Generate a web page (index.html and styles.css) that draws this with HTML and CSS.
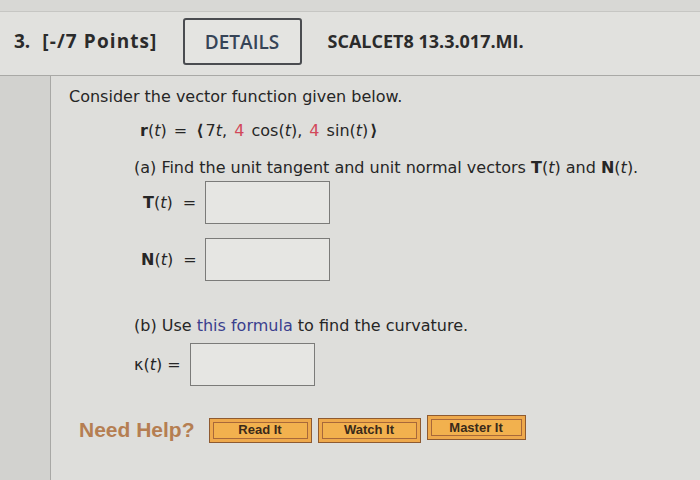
FILE: index.html
```html
<!DOCTYPE html>
<html>
<head>
<meta charset="utf-8">
<link rel="stylesheet" href="styles.css">
</head>
<body>
<div class="page">
  <div class="topstrip"></div>
  <header class="header">
    <span class="qnum">3.</span><span class="pts">[-/7 Points]</span>
    <span class="details">DETAILS</span>
    <span class="code">SCALCET8 13.3.017.MI.</span>
  </header>
  <div class="body">
    <div class="gutter"></div>
    <main class="content">
      <p class="intro">Consider the vector function given below.</p>
      <p class="formula"><b class="vec">r</b>(<i>t</i>) = <span class="ang">⟨</span>7<i>t</i>, <span class="red">4</span> cos(<i>t</i>), <span class="red">4</span> sin(<i>t</i>)<span class="ang">⟩</span></p>
      <p class="part parta">(a) Find the unit tangent and unit normal vectors <b>T</b>(<i>t</i>) and <b>N</b>(<i>t</i>).</p>
      <div class="ansrow rowT">
        <span class="lbl"><b>T</b>(<i>t</i>) &nbsp;=</span>
        <span class="box"></span>
      </div>
      <div class="ansrow rowN">
        <span class="lbl"><b>N</b>(<i>t</i>) &nbsp;=</span>
        <span class="box"></span>
      </div>
      <p class="part partb">(b) Use <span class="link">this formula</span> to find the curvature.</p>
      <div class="ansrow rowK">
        <span class="lbl">κ(<i>t</i>) =</span>
        <span class="box"></span>
      </div>
      <div class="help">
        <span class="needhelp">Need Help?</span>
        <span class="btn">Read It</span>
        <span class="btn">Watch It</span>
        <span class="btn btn3">Master It</span>
      </div>
    </main>
  </div>
</div>
</body>
</html>
```
FILE: styles.css
```css
html, body {
  margin: 0;
  padding: 0;
}
body {
  width: 700px;
  height: 480px;
  overflow: hidden;
  background: #d9d9d6;
}
.page {
  display: flex;
  flex-direction: column;
  height: 480px;
}
.topstrip {
  height: 11px;
  background: #d8d8d5;
  border-bottom: 1px solid #c6c6c3;
}
.header {
  height: 64px;
  box-sizing: border-box;
  padding-bottom: 6px;
  display: flex;
  align-items: center;
  background: #e1e1de;
  border-bottom: 1px solid #a9a9a6;
  font-family: "Open Sans", sans-serif;
  color: #2b2b2b;
  font-size: 19px;
  font-weight: 700;
}
.qnum {
  margin-left: 14px;
}
.pts {
  margin-left: 12px;
  letter-spacing: 1.1px;
}
.details {
  margin-left: 25px;
  width: 115px;
  height: 43px;
  border: 2px solid #4a4c50;
  border-radius: 3px;
  display: flex;
  align-items: center;
  justify-content: center;
  font-weight: 600;
  font-size: 19px;
  color: #364457;
  background: #e4e4e1;
  margin-top: 2px;
}
.code {
  margin-left: 26px;
  font-size: 18px;
}
.body {
  flex: 1;
  display: flex;
}
.gutter {
  width: 50px;
  background: #d2d2cf;
  border-right: 1px solid #a8a8a5;
}
.content {
  flex: 1;
  background: #dededb;
  font-family: "DejaVu Sans", Verdana, sans-serif;
  font-size: 16px;
  line-height: 20px;
  color: #262626;
  padding-left: 18px;
}
.content p {
  margin: 0;
}
.content .intro {
  margin-top: 11px;
}
.content .formula {
  margin-top: 14px;
  margin-left: 71px;
  word-spacing: 2px;
}
.ang {
  margin: 0 2px;
  font-weight: 700;
}
.red { color: #d2485a; }
.content .part {
  margin-left: 65px;
}
.content .parta { margin-top: 17px; }
.ansrow {
  display: flex;
  align-items: center;
}
.lbl {
  display: inline-block;
}
.rowT { margin-top: 3px; margin-left: 74px; }
.rowN { margin-top: 14px; margin-left: 72px; }
.rowT .lbl { width: 62px; }
.rowN .lbl { width: 64px; }
.box {
  display: inline-block;
  width: 123px;
  height: 41px;
  border: 1px solid #7b7b79;
  background: #e6e6e3;
}
.content .partb {
  margin-top: 35px;
}
.rowK { margin-top: 7px; margin-left: 65px; }
.rowK .lbl { width: 56px; }
.link { color: #3a3f8e; }
.help {
  display: flex;
  align-items: center;
  height: 28px;
  margin-top: 30px;
  margin-left: 10px;
  font-family: "Liberation Sans", Arial, sans-serif;
}
.needhelp {
  font-size: 21px;
  font-weight: 700;
  color: #b57e52;
  margin-right: 14px;
}
.btn {
  box-sizing: border-box;
  width: 103px;
  height: 25px;
  border: 1px solid #8e5a30;
  box-shadow: inset 0 0 0 3px #eea94c, inset 0 0 0 4px #a8683a;
  background: #f2b14e;
  font-size: 13px;
  font-weight: 700;
  color: #3a2a1a;
  display: flex;
  align-items: center;
  justify-content: center;
  margin-right: 6px;
}
.btn3 { margin-top: -5px; width: 99px; }
```
